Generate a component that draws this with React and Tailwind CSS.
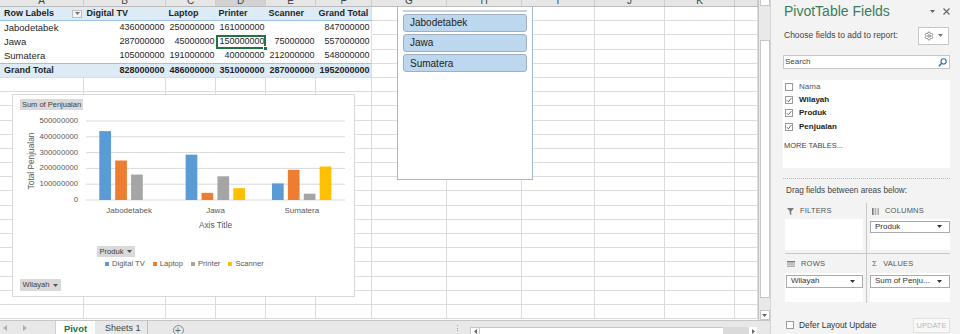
import { Settings } from "lucide-react";

const COLS = [
  { id: "A", w: "w-[84px]" },
  { id: "B", w: "w-[82px]" },
  { id: "C", w: "w-[50px]" },
  { id: "D", w: "w-[50px]" },
  { id: "E", w: "w-[50px]" },
  { id: "F", w: "w-[56px]" },
  { id: "G", w: "w-[75px]" },
  { id: "H", w: "w-[75px]" },
  { id: "I", w: "w-[73px]" },
  { id: "J", w: "w-[70px]" },
  { id: "K", w: "w-[70px]" },
  { id: "L", w: "w-[23px]" },
];

const PIVOT = [
  ["Row Labels", "Digital TV", "Laptop", "Printer", "Scanner", "Grand Total"],
  ["Jabodetabek", "436000000", "250000000", "161000000", "", "847000000"],
  ["Jawa", "287000000", "45000000", "150000000", "75000000", "557000000"],
  ["Sumatera", "105000000", "191000000", "40000000", "212000000", "548000000"],
  ["Grand Total", "828000000", "486000000", "351000000", "287000000", "1952000000"],
];

const SERIES = [
  { name: "Digital TV", color: "#5b9bd5", bg: "bg-[#5b9bd5]" },
  { name: "Laptop", color: "#ed7d31", bg: "bg-[#ed7d31]" },
  { name: "Printer", color: "#a5a5a5", bg: "bg-[#a5a5a5]" },
  { name: "Scanner", color: "#ffc000", bg: "bg-[#ffc000]" },
];

const REGIONS = [
  { name: "Jabodetabek", v: [436, 250, 161, 0] },
  { name: "Jawa", v: [287, 45, 150, 75] },
  { name: "Sumatera", v: [105, 191, 40, 212] },
];

function Caret({ className = "" }) {
  return (
    <svg width="5" height="3" viewBox="0 0 5 3" className={className}>
      <polygon points="0,0 5,0 2.5,3" fill="currentColor" />
    </svg>
  );
}

function Check() {
  return (
    <svg width="6" height="6" viewBox="0 0 6 6">
      <path d="M0.8 3.2 L2.4 4.8 L5.3 1.2" stroke="#555" strokeWidth="0.9" fill="none" />
    </svg>
  );
}

function PivotCell({ r, i, w, text }) {
  const head = r === 0;
  const total = r === 4;
  let cls = `${w} h-full shrink-0 flex items-center whitespace-nowrap border-b`;
  cls += head || total ? " bg-[#ddebf7]" : " bg-white";
  cls += head || r === 3 ? " border-b-[#9bc2e6]" : total ? " border-b-[#dcdcdc]" : " border-b-white";
  if (i === 5) cls += " border-r border-r-[#dcdcdc]";
  if (head || total) cls += " font-bold text-[9px]";

  if (i === 0) {
    return (
      <div className={`${cls} justify-between pl-[4px] pr-[2px] ${head || total ? "" : "text-[9.5px]"}`}>
        <span>{text}</span>
        {head && (
          <span className="w-[10px] h-[8px] border border-[#bdbdbd] bg-[#f4f4f4] flex items-center justify-center text-[#777]">
            <Caret />
          </span>
        )}
      </div>
    );
  }
  if (head) {
    return <div className={`${cls} pl-[2.5px]`}>{text}</div>;
  }
  const active = r === 2 && i === 3;
  return (
    <div className={`${cls} justify-end pr-[1.5px] ${total ? "" : "text-[9px]"} ${active ? "relative" : ""}`}>
      {text}
      {active && (
        <div className="absolute inset-0 border-2 border-[#217346]">
          <div className="absolute right-[-4px] bottom-[-4px] w-[5px] h-[5px] bg-[#217346] border border-white" />
        </div>
      )}
    </div>
  );
}

function Slicer() {
  return (
    <div className="absolute left-[397px] top-[-3px] w-[136px] h-[176px] bg-white border border-[#a3b7cc] flex flex-col px-[5px]">
      <div className="mt-[5px] h-[2px] bg-[#c5d2df] shrink-0" />
      <div className="mt-[2px] flex flex-col gap-[2.7px]">
        {REGIONS.map((r) => (
          <div
            key={r.name}
            className="h-[17.5px] rounded-[3px] bg-[#bdd7ee] border border-[#9fb0c2] flex items-center pl-[6px] text-[10px] text-[#222]"
          >
            {r.name}
          </div>
        ))}
      </div>
    </div>
  );
}

function Chart() {
  const base = 90;
  const k = 0.158;
  return (
    <div className="absolute left-[12px] top-[87px] w-[343px] h-[203px] bg-white border border-[#d9d9d9] flex flex-col text-[#595959]">
      <div className="ml-[7px] mt-[4px] w-[63px] h-[11px] shrink-0 bg-[#d9d9d9] text-[7.5px] leading-[11px] text-[#404040] text-center">
        Sum of Penjualan
      </div>
      <svg width="341" height="122" className="block shrink-0">
        <text
          transform="translate(19 51) rotate(-90)"
          textAnchor="middle"
          dominantBaseline="middle"
          fontSize="8.3"
          fill="#595959"
        >
          Total Penjualan
        </text>
        {[0, 1, 2, 3, 4, 5].map((n) => {
          const y = base - n * 15.8;
          return (
            <g key={n}>
              <line x1="73" x2="332" y1={y} y2={y} stroke="#d9d9d9" strokeWidth="1" />
              <text x="65" y={y} textAnchor="end" dominantBaseline="middle" fontSize="7.7" fill="#595959">
                {n === 0 ? "0" : `${n}00000000`}
              </text>
            </g>
          );
        })}
        {REGIONS.map((r, i) =>
          r.v.map((v, j) =>
            v ? (
              <rect
                key={`${i}-${j}`}
                x={73 + i * 86.33 + 13.3 + j * 15.9}
                y={base - v * k}
                width="11.7"
                height={v * k}
                fill={SERIES[j].color}
              />
            ) : null
          )
        )}
        {REGIONS.map((r, i) => (
          <text
            key={r.name}
            x={73 + 43.17 + i * 86.33}
            y="101"
            textAnchor="middle"
            dominantBaseline="middle"
            fontSize="8"
            fill="#595959"
          >
            {r.name}
          </text>
        ))}
        <text x="202.5" y="116" textAnchor="middle" dominantBaseline="middle" fontSize="8.3" fill="#595959">
          Axis Title
        </text>
      </svg>
      <div className="ml-[84px] mt-[14px] w-[38px] h-[10.5px] shrink-0 bg-[#d9d9d9] flex items-center pl-[2.5px] gap-[3px] text-[7.6px] text-[#404040]">
        Produk <Caret className="text-[#555]" />
      </div>
      <div className="ml-[92px] mt-[3.5px] h-[8px] shrink-0 flex items-center gap-[8px] text-[7.6px]">
        {SERIES.map((s) => (
          <div key={s.name} className="flex items-center gap-[3px]">
            <span className={`w-[4px] h-[4px] ${s.bg}`} />
            <span>{s.name}</span>
          </div>
        ))}
      </div>
      <div className="ml-[7px] mt-[11px] w-[41px] h-[12px] shrink-0 bg-[#d9d9d9] flex items-center pl-[2.5px] gap-[3.5px] text-[7.6px] text-[#404040]">
        Wilayah <Caret className="text-[#555]" />
      </div>
    </div>
  );
}

function Sheet() {
  return (
    <div className="w-[758px] h-full shrink-0 flex flex-col overflow-hidden">
      <div className="flex h-[7px] shrink-0 bg-[#e6e6e6] border-b border-[#bcbcbc]">
        {COLS.map((c) => (
          <div
            key={c.id}
            className={`${c.w} shrink-0 h-full flex items-end justify-center overflow-hidden border-r border-[#cdcdcd] ${
              c.id === "D" ? "bg-[#d2d2d2]" : ""
            }`}
          >
            {c.id !== "L" && <span className="text-[10px] leading-none mb-[0.5px] text-[#444]">{c.id}</span>}
          </div>
        ))}
      </div>
      <div className="relative flex-1 overflow-hidden">
        {Array.from({ length: 22 }).map((_, r) => (
          <div key={r} className="flex h-[14.2px] shrink-0">
            {COLS.map((c, i) =>
              PIVOT[r] && i < 6 ? (
                <PivotCell key={c.id} r={r} i={i} w={c.w} text={PIVOT[r][i]} />
              ) : (
                <div key={c.id} className={`${c.w} h-full shrink-0 border-r border-b border-[#dcdcdc]`} />
              )
            )}
          </div>
        ))}
        <Slicer />
        <Chart />
      </div>
    </div>
  );
}

function VScroll() {
  return (
    <div className="w-[12px] h-full shrink-0 bg-[#e9e9e9] border-l border-[#c6c6c6] flex flex-col items-center">
      <div className="w-[10px] h-[6px] shrink-0 bg-white border border-t-0 border-[#c6c6c6]" />
      <div className="mt-[34px] w-[10px] h-[258px] shrink-0 bg-white border border-[#c6c6c6]" />
      <div className="mt-[12px] w-[10px] h-[10px] shrink-0 bg-white border border-[#c6c6c6] flex items-center justify-center text-[#666]">
        <Caret />
      </div>
    </div>
  );
}

function SheetTabs() {
  return (
    <div className="h-[14px] shrink-0 bg-[#e8e8e8] border-t border-[#c6c6c6] flex items-start">
      <div className="w-[55px] h-full flex items-center pl-[3px] gap-[16px] text-[#b0b0b0]">
        <svg width="4" height="6" viewBox="0 0 4 6">
          <polygon points="4,0 4,6 0,3" fill="currentColor" />
        </svg>
        <svg width="4" height="6" viewBox="0 0 4 6">
          <polygon points="0,0 0,6 4,3" fill="currentColor" />
        </svg>
      </div>
      <div className="w-[40px] h-full bg-white border-l border-[#d0d0d0] pt-[3px] text-center text-[9.5px] leading-none font-bold text-[#217346]">
        Pivot
      </div>
      <div className="w-[53px] h-full border-r border-[#bdbdbd] pt-[3px] pl-[10px] text-[9px] leading-none text-[#444]">
        Sheets 1
      </div>
      <div className="w-[60px] h-full flex justify-center pt-[4px]">
        <span className="w-[11px] h-[11px] rounded-full border border-[#8a8a8a] flex items-center justify-center text-[10px] leading-none text-[#666]">
          +
        </span>
      </div>
      <div className="w-[247px]" />
      <div className="w-[5px] h-full flex flex-col items-center gap-[1.5px] pt-[4px]">
        <span className="w-[1px] h-[1px] bg-[#999]" />
        <span className="w-[1px] h-[1px] bg-[#999]" />
        <span className="w-[1px] h-[1px] bg-[#999]" />
      </div>
      <div className="ml-[10px] mt-[5.7px] flex h-[10px]">
        <div className="w-[10px] h-full bg-white border border-[#c6c6c6] flex items-center justify-center text-[#666]">
          <svg width="3" height="5" viewBox="0 0 3 5">
            <polygon points="3,0 3,5 0,2.5" fill="currentColor" />
          </svg>
        </div>
        <div className="w-[243px] h-full bg-white border-t border-b border-[#c6c6c6]" />
        <div className="w-[26px] h-full bg-[#dadada]" />
        <div className="w-[8px] h-full bg-white flex items-center justify-center text-[#666]">
          <svg width="3" height="5" viewBox="0 0 3 5">
            <polygon points="0,0 0,5 3,2.5" fill="currentColor" />
          </svg>
        </div>
      </div>
    </div>
  );
}

const FIELDS = [
  { name: "Nama", on: false },
  { name: "Wilayah", on: true },
  { name: "Produk", on: true },
  { name: "Penjualan", on: true },
];

function Dropdown({ label, className = "" }) {
  return (
    <div
      className={`h-[12.5px] bg-white border border-[#ababab] flex items-center justify-between pl-[4px] pr-[7px] text-[8px] text-[#333] ${className}`}
    >
      <span>{label}</span>
      <Caret className="text-[#333]" />
    </div>
  );
}

function AreaHead({ icon, label, className = "" }) {
  return (
    <div className={`flex items-center gap-[6px] pl-[2px] text-[7.5px] text-[#555] tracking-[0.2px] ${className}`}>
      {icon}
      <span>{label}</span>
    </div>
  );
}

function FieldsPane() {
  return (
    <div className="w-[190px] h-full shrink-0 bg-[#f3f3f3] border-l border-[#d4d4d4] flex flex-col pl-[12px] pr-[10px]">
      <div className="h-[23px] shrink-0 flex items-center justify-between">
        <span className="ml-[1px] text-[14px] text-[#3b7d5a]">PivotTable Fields</span>
        <div className="flex items-center gap-[8px] text-[#666]">
          <Caret />
          <svg width="7" height="7" viewBox="0 0 7 7">
            <path d="M0.5 0.5 L6.5 6.5 M6.5 0.5 L0.5 6.5" stroke="currentColor" strokeWidth="1.2" />
          </svg>
        </div>
      </div>
      <div className="mt-[3.5px] h-[18.5px] shrink-0 flex items-center justify-between">
        <span className="ml-[1px] text-[8.5px] text-[#444]">Choose fields to add to report:</span>
        <div className="w-[31px] h-full mr-[1px] bg-white border border-[#c6c6c6] flex items-center justify-center gap-[4px] text-[#777]">
          <Settings size={10} strokeWidth={2} />
          <Caret />
        </div>
      </div>
      <div className="mt-[10px] h-[14px] shrink-0 bg-white border border-[#c6c6c6] flex items-center justify-between pl-[1px] pr-[2px]">
        <span className="text-[8px] text-[#444]">Search</span>
        <svg width="9" height="9" viewBox="0 0 9 9">
          <circle cx="5.6" cy="3.4" r="2.6" stroke="#2e6db4" strokeWidth="1.1" fill="none" />
          <path d="M3.7 5.3 L0.8 8.2" stroke="#2e6db4" strokeWidth="1.5" />
        </svg>
      </div>
      <div className="mt-[11px] h-[88px] shrink-0 bg-white flex flex-col">
        {FIELDS.map((f) => (
          <div key={f.name} className="h-[13.4px] shrink-0 flex items-center gap-[6px] pl-[2px]">
            <span className="w-[8px] h-[8px] border border-[#9a9a9a] bg-white flex items-center justify-center">
              {f.on && <Check />}
            </span>
            <span className={`text-[8px] ${f.on ? "font-bold text-[#222]" : "text-[#555]"}`}>{f.name}</span>
          </div>
        ))}
        <div className="mt-[6px] h-[13px] flex items-center pl-[1px] text-[7.5px] text-[#444]">MORE TABLES...</div>
      </div>
      <div className="mt-[10px] shrink-0 border-t border-dotted border-[#b8b8b8]" />
      <div className="mt-[7px] h-[10px] shrink-0 pl-[3px] text-[8.2px] leading-[10px] text-[#444]">
        Drag fields between areas below:
      </div>
      <div className="mt-[7px] ml-[2px] shrink-0 flex flex-col">
        <div className="flex h-[51px] border-b border-[#c8c8c8]">
          <div className="w-[82px] border-r border-[#c8c8c8] flex flex-col">
            <AreaHead
              className="h-[16px]"
              label="FILTERS"
              icon={
                <svg width="7" height="7" viewBox="0 0 7 7">
                  <polygon points="0,0 7,0 4.3,3.3 4.3,7 2.7,6 2.7,3.3" fill="#7a7a7a" />
                </svg>
              }
            />
            <div className="w-[78px] h-[31px] bg-white" />
          </div>
          <div className="flex-1 flex flex-col pl-[3px]">
            <AreaHead
              className="h-[16px]"
              label="COLUMNS"
              icon={
                <svg width="7" height="7" viewBox="0 0 7 7">
                  <rect x="0" y="0" width="1.6" height="7" fill="#7a7a7a" />
                  <rect x="2.7" y="0" width="1.6" height="7" fill="#b0b0b0" />
                  <rect x="5.4" y="0" width="1.6" height="7" fill="#b0b0b0" />
                </svg>
              }
            />
            <div className="w-[80px] h-[31px] bg-white pt-[1.5px]">
              <Dropdown label="Produk" />
            </div>
          </div>
        </div>
        <div className="flex h-[49px]">
          <div className="w-[82px] border-r border-[#c8c8c8] flex flex-col">
            <AreaHead
              className="h-[19px]"
              label="ROWS"
              icon={
                <svg width="8" height="6" viewBox="0 0 8 6">
                  <rect x="0" y="0" width="8" height="1.5" fill="#7a7a7a" />
                  <rect x="0" y="2.3" width="8" height="1.5" fill="#b0b0b0" />
                  <rect x="0" y="4.5" width="8" height="1.5" fill="#b0b0b0" />
                </svg>
              }
            />
            <div className="w-[78px] h-[29px] bg-white pt-[2px] pl-[1px]">
              <Dropdown label="Wilayah" />
            </div>
          </div>
          <div className="flex-1 flex flex-col pl-[3px]">
            <AreaHead
              className="h-[19px]"
              label="VALUES"
              icon={<span className="text-[8px] leading-none text-[#666]">Σ</span>}
            />
            <div className="w-[80px] h-[29px] bg-white pt-[2px]">
              <Dropdown label="Sum of Penju..." />
            </div>
          </div>
        </div>
      </div>
      <div className="mt-[15px] h-[15px] shrink-0 flex items-center justify-between pl-[3px]">
        <div className="flex items-center gap-[5px]">
          <span className="w-[8px] h-[8px] bg-white border border-[#9a9a9a]" />
          <span className="text-[8.4px] text-[#333]">Defer Layout Update</span>
        </div>
        <div className="w-[37px] h-full bg-[#f8f8f8] border border-[#e2e2e2] flex items-center justify-center text-[7.5px] text-[#b8b8b8]">
          UPDATE
        </div>
      </div>
    </div>
  );
}

export default function App() {
  return (
    <div className="w-[960px] h-[334px] overflow-hidden flex bg-white text-[#1f1f1f] font-['Liberation_Sans',Arial,sans-serif]">
      <div className="w-[770px] h-full shrink-0 flex flex-col">
        <div className="flex h-[320px] shrink-0">
          <Sheet />
          <VScroll />
        </div>
        <SheetTabs />
      </div>
      <FieldsPane />
    </div>
  );
}
